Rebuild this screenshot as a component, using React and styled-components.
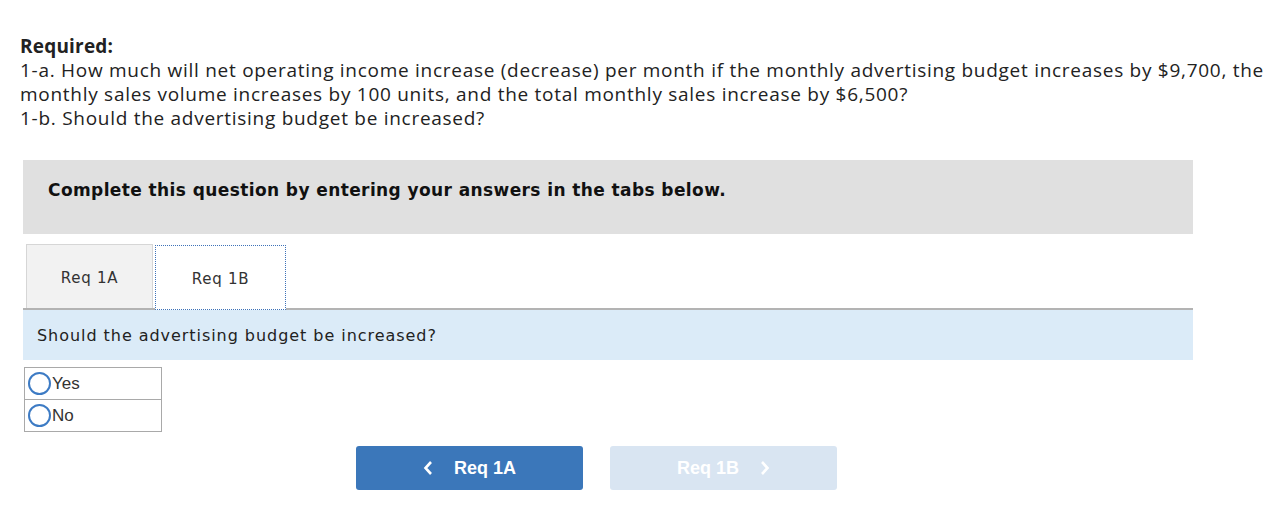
import React from 'react';
import styled, { createGlobalStyle } from 'styled-components';

const Global = createGlobalStyle`
  body {
    margin: 0;
    background: #fff;
  }
`;

const Page = styled.div`
  padding: 34px 8px 0 20px;
`;

const Prompt = styled.div`
  font-family: "Open Sans", Lato, sans-serif;
  font-size: 19px;
  letter-spacing: 0.72px;
  line-height: 24px;
  color: #222;
  width: 1252px;
  strong {
    font-weight: 700;
    letter-spacing: 0.2px;
    display: block;
  }
`;

const Question = styled.div`
  margin: 30px 0 0 3px;
  width: 1170px;
`;

const Banner = styled.div`
  background: #e0e0e0;
  height: 74px;
  box-sizing: border-box;
  padding: 19px 0 0 25px;
  font-family: "DejaVu Sans", Verdana, sans-serif;
  font-weight: 700;
  font-size: 17px;
  line-height: 22px;
  letter-spacing: 0.4px;
  color: #111;
`;

const TabBar = styled.div`
  display: flex;
  align-items: flex-end;
  gap: 2px;
  margin-top: 9px;
  padding-left: 3px;
  border-bottom: 2px solid #b3b3b3;
  height: 65px;
`;

const Tab = styled.div`
  width: ${p => p.w}px;
  height: ${p => (p.active ? 65 : 64)}px;
  box-sizing: border-box;
  padding-top: 3px;
  display: flex;
  align-items: center;
  justify-content: center;
  font-family: "DejaVu Sans", Verdana, sans-serif;
  font-size: 15px;
  letter-spacing: 0.7px;
  color: #333;
  background: ${p => (p.active ? '#fff' : '#f2f2f2')};
  border: ${p => (p.active ? '1.5px dotted #3e72b8' : '1px solid #d6d6d6')};
  border-bottom: ${p => (p.active ? '1.5px dotted #3e72b8' : 'none')};
  margin-bottom: ${p => (p.active ? -2 : 0)}px;
`;

const Ask = styled.div`
  background: #dbebf8;
  height: 50px;
  padding-left: 14px;
  display: flex;
  align-items: center;
  font-family: "DejaVu Sans", Verdana, sans-serif;
  font-size: 16px;
  letter-spacing: 0.95px;
  color: #222;
`;

const Choices = styled.div`
  margin: 7px 0 0 1px;
  width: 136px;
  border: 1px solid #a9a9a9;
`;

const Choice = styled.label`
  display: flex;
  align-items: center;
  gap: 1px;
  height: 31px;
  padding-left: 3px;
  font-family: "Liberation Sans", Arial, sans-serif;
  font-size: 17px;
  color: #333;
  & + & {
    border-top: 1px solid #a9a9a9;
  }
`;

const Radio = styled.span`
  width: 19px;
  height: 19px;
  border: 2px solid #3d7bc4;
  border-radius: 50%;
  flex-shrink: 0;
`;

const Nav = styled.div`
  display: flex;
  gap: 27px;
  margin: 14px 0 0 333px;
`;

const NavButton = styled.div`
  width: 227px;
  height: 44px;
  border-radius: 3px;
  display: flex;
  align-items: center;
  justify-content: center;
  gap: 21px;
  font-family: "Liberation Sans", Arial, sans-serif;
  font-weight: 700;
  font-size: 18px;
  color: #fff;
  background: ${p => (p.disabled ? '#d9e5f2' : '#3b77ba')};
  svg {
    display: block;
  }
`;

const Chevron = ({ dir }) => (
  <svg width="10" height="16" viewBox="0 0 10 16">
    <path
      d={dir === 'left' ? 'M8 2 L2.5 8 L8 14' : 'M2 2 L7.5 8 L2 14'}
      fill="none"
      stroke="#fff"
      strokeWidth="2.6"
    />
  </svg>
);

export default function App() {
  return (
    <Page>
      <Global />
      <Prompt>
        <strong>Required:</strong>
        1-a. How much will net operating income increase (decrease) per month if the monthly advertising budget increases by $9,700, the monthly sales volume increases by 100 units, and the total monthly sales increase by $6,500?
        <br />
        1-b. Should the advertising budget be increased?
      </Prompt>
      <Question>
        <Banner>Complete this question by entering your answers in the tabs below.</Banner>
        <TabBar>
          <Tab w={127}>Req 1A</Tab>
          <Tab w={131} active>Req 1B</Tab>
        </TabBar>
        <Ask>Should the advertising budget be increased?</Ask>
        <Choices>
          <Choice><Radio />Yes</Choice>
          <Choice><Radio />No</Choice>
        </Choices>
        <Nav>
          <NavButton>
            <Chevron dir="left" />
            <span>Req 1A</span>
          </NavButton>
          <NavButton disabled>
            <span>Req 1B</span>
            <Chevron dir="right" />
          </NavButton>
        </Nav>
      </Question>
    </Page>
  );
}
